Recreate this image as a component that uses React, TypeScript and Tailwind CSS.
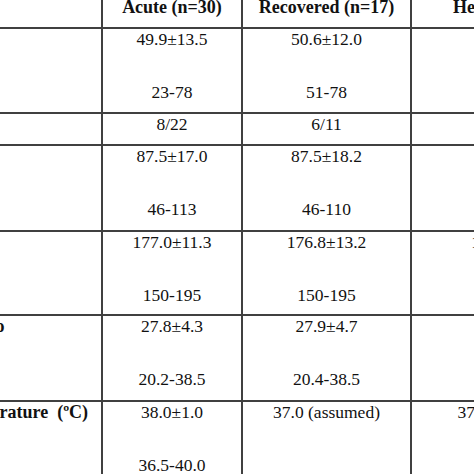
type Row = {
  label: string;
  height: string;
  acute: string[];
  recovered: string[];
  healthy: string[];
};

const rows: Row[] = [
  { label: 'Age (years)', height: 'h-[85px]', acute: ['49.9±13.5', '23-78'], recovered: ['50.6±12.0', '51-78'], healthy: ['48.1±12.6', '25-75'] },
  { label: 'Sex (M/F)', height: 'h-[32px]', acute: ['8/22'], recovered: ['6/11'], healthy: ['6/14'] },
  { label: 'Weight (kg)', height: 'h-[86px]', acute: ['87.5±17.0', '46-113'], recovered: ['87.5±18.2', '46-110'], healthy: ['80.2±14.1', '55-108'] },
  { label: 'Height (cm)', height: 'h-[84px]', acute: ['177.0±11.3', '150-195'], recovered: ['176.8±13.2', '150-195'], healthy: ['175.0±10.8', '155-192'] },
  { label: 'Weight ratio', height: 'h-[86px]', acute: ['27.8±4.3', '20.2-38.5'], recovered: ['27.9±4.7', '20.4-38.5'], healthy: ['26.1±3.9', '19.8-34.2'] },
  { label: 'Body temperature  (ºC)', height: 'h-[100px]', acute: ['38.0±1.0', '36.5-40.0'], recovered: ['37.0 (assumed)'], healthy: ['37.0 (assumed)'] },
];

function DataCell({ lines, width }: { lines: string[]; width: string }) {
  return (
    <div className={`${width} shrink-0 border-r-2 border-[#404040] text-center text-[17.5px] leading-[20px]`}>
      <div>{lines[0]}</div>
      {lines[1] && <div className="mt-[32.5px]">{lines[1]}</div>}
    </div>
  );
}

export default function App() {
  return (
    <div className="w-[474px] h-[474px] overflow-hidden bg-white text-[#111] font-['Liberation_Serif','Times_New_Roman',serif]">
      <div className="ml-[-100px] mt-[-3px] w-[712px]">
        {/* header */}
        <div className="flex h-[32px] border-b-2 border-[#404040] text-[18px] font-bold leading-[20px]">
          <div className="w-[203px] shrink-0 border-r-2 border-[#404040]" />
          <div className="w-[140px] shrink-0 border-r-2 border-[#404040] text-center whitespace-nowrap">Acute (n=30)</div>
          <div className="w-[169px] shrink-0 border-r-2 border-[#404040] text-center whitespace-nowrap">Recovered (n=17)</div>
          <div className="w-[200px] shrink-0 border-r-2 border-[#404040] text-center whitespace-nowrap">Healthy (n=20)</div>
        </div>

        {rows.map((row) => (
          <div key={row.label} className={`flex ${row.height} border-b-2 border-[#404040]`}>
            <div className="w-[203px] shrink-0 border-r-2 border-[#404040] pl-[8px] text-[18px] font-bold leading-[20px] whitespace-pre">
              {row.label}
            </div>
            <DataCell lines={row.acute} width="w-[140px]" />
            <DataCell lines={row.recovered} width="w-[169px]" />
            <DataCell lines={row.healthy} width="w-[200px]" />
          </div>
        ))}
      </div>
    </div>
  );
}
